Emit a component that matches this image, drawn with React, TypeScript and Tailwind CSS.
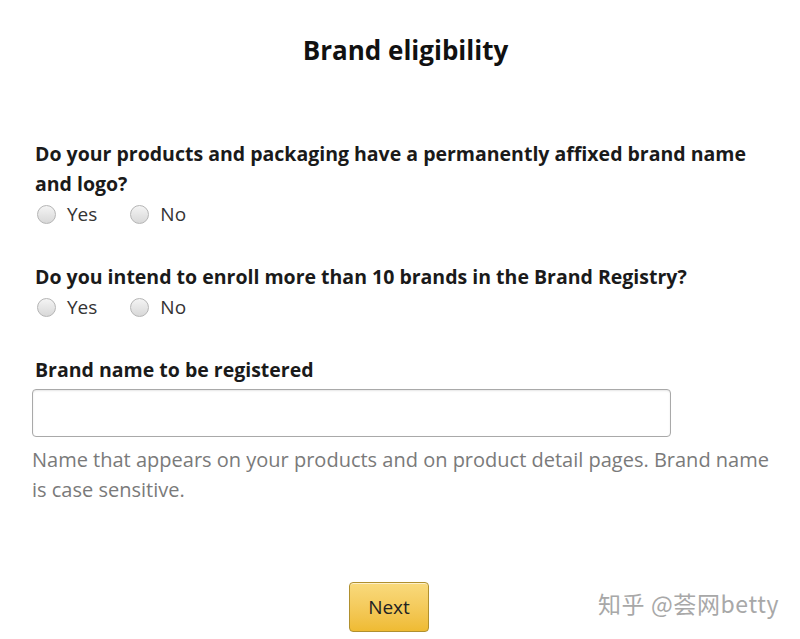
import React from "react";

function Radio({ label }: { label: string }) {
  return (
    <label className="flex items-center gap-[11px]">
      <span className="w-[19px] h-[19px] rounded-full border border-[#b5b5b5] bg-gradient-to-b from-[#f4f4f4] to-[#d8d8d8] inline-block" />
      <span className="text-[19px] text-[#333]">{label}</span>
    </label>
  );
}

export default function App() {
  return (
    <div
      className="w-[800px] h-[639px] bg-white relative overflow-hidden text-[#111]"
      style={{ fontFamily: '"Open Sans", "Noto Sans", sans-serif' }}
    >
      <div className="pt-[31px] pl-[11px] text-center">
        <h1 className="text-[26px] font-bold leading-[38px] text-[#111]">Brand eligibility</h1>
      </div>
      <div className="pl-[35px] pr-[20px] pt-[70px]">
        <div className="text-[19.5px] font-bold leading-[30px] text-[#1a1a1a] whitespace-nowrap">
          Do your products and packaging have a permanently affixed brand name
          <br />
          and logo?
        </div>
        <div className="flex gap-[33px] pl-[2px] leading-[30px]">
          <Radio label="Yes" />
          <Radio label="No" />
        </div>
        <div className="mt-[33px] text-[19.5px] font-bold leading-[30px] text-[#1a1a1a] whitespace-nowrap">
          Do you intend to enroll more than 10 brands in the Brand Registry?
        </div>
        <div className="flex gap-[33px] pl-[2px] leading-[30px]">
          <Radio label="Yes" />
          <Radio label="No" />
        </div>
        <div className="mt-[33px] text-[19.5px] font-bold leading-[30px] text-[#1a1a1a]">
          Brand name to be registered
        </div>
      </div>
      <div className="pl-[32px] mt-[4px]">
        <div className="w-[639px] h-[48px] rounded-[4px] border border-[#a9a9a9] shadow-[inset_0_1px_2px_rgba(0,0,0,0.1)]" />
        <div className="mt-[8px] text-[20px] leading-[30px] text-[#7a7a7a] whitespace-nowrap">
          Name that appears on your products and on product detail pages. Brand name
          <br />
          is case sensitive.
        </div>
      </div>
      <div className="flex justify-center mt-[77px] pr-[22px]">
        <button className="w-[80px] h-[50px] rounded-[4px] border border-[#b0902e] bg-gradient-to-b from-[#f9da7c] to-[#efbb32] text-[19px] text-[#222] shadow-[inset_0_1px_0_rgba(255,255,255,0.6)]">
          Next
        </button>
      </div>
      <div
        className="absolute left-[598px] top-[586px] text-[23px] text-[#a8a8a8] tracking-[0.6px]"
        style={{ fontFamily: '"Noto Sans CJK SC", "Noto Sans", sans-serif' }}
      >
        知乎 @荟网betty
      </div>
    </div>
  );
}
